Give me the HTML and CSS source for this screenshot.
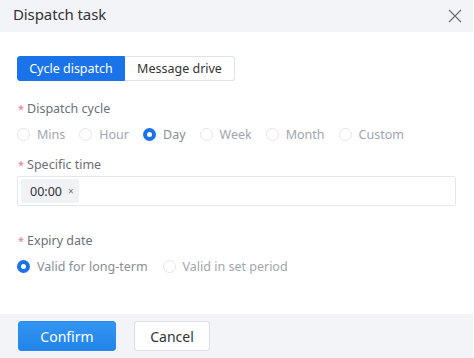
FILE: index.html
```html
<!DOCTYPE html>
<html>
<head>
<meta charset="utf-8">
<link rel="stylesheet" href="styles.css">
</head>
<body>
<div class="dialog">
  <div class="header">
    <span class="title">Dispatch task</span>
    <svg class="close" width="14" height="14" viewBox="0 0 14 14"><path d="M1 1L13 13M13 1L1 13" stroke="#6b6f76" stroke-width="1.2" fill="none"/></svg>
  </div>
  <div class="body">
    <div class="segment">
      <span class="seg active">Cycle dispatch</span>
      <span class="seg">Message drive</span>
    </div>
    <div class="field f1">
      <div class="label"><span class="req">*</span>Dispatch cycle</div>
      <div class="radios">
        <span class="radio"><i class="dot"></i>Mins</span>
        <span class="radio"><i class="dot"></i>Hour</span>
        <span class="radio on"><i class="dot"></i>Day</span>
        <span class="radio"><i class="dot"></i>Week</span>
        <span class="radio"><i class="dot"></i>Month</span>
        <span class="radio"><i class="dot"></i>Custom</span>
      </div>
    </div>
    <div class="field f2">
      <div class="label"><span class="req">*</span>Specific time</div>
      <div class="input"><span class="tag">00:00<span class="x">×</span></span></div>
    </div>
    <div class="field f3">
      <div class="label"><span class="req">*</span>Expiry date</div>
      <div class="radios wide">
        <span class="radio on"><i class="dot"></i>Valid for long-term</span>
        <span class="radio"><i class="dot"></i>Valid in set period</span>
      </div>
    </div>
  </div>
  <div class="footer">
    <button class="btn primary">Confirm</button>
    <button class="btn">Cancel</button>
  </div>
</div>
</body>
</html>
```
FILE: styles.css
```css
* { box-sizing: border-box; }
html, body { margin: 0; padding: 0; background: #fff; }
body { font-family: "Noto Sans", "Open Sans", sans-serif; color: #5f6368; width: 474px; height: 358px; overflow: hidden; }
.dialog { width: 473px; height: 358px; display: flex; flex-direction: column; }
.header { height: 32px; background: #f2f4f8; display: flex; align-items: center; justify-content: space-between; padding: 0 11px 0 13px; flex: none; }
.title { font-size: 15px; color: #333; letter-spacing: -0.1px; position: relative; top: -2px; }
.close { display: block; }
.body { flex: 1; padding: 24px 17px 0 17px; }
.segment { display: flex; height: 25px; }
.seg { font-size: 12.5px; display: flex; align-items: center; justify-content: center; border: 1px solid #dfe2e7; color: #333; }
.seg.active { width: 108px; background: #1a73e8; border-color: #1a73e8; color: #fff; border-radius: 3px 0 0 3px; }
.seg:not(.active) { width: 110px; border-left: none; border-radius: 0 3px 3px 0; }
.field { display: flex; flex-direction: column; }
.f1 { margin-top: 19px; }
.f2 { margin-top: 13px; }
.f3 { margin-top: 26px; }
.label { font-size: 12.5px; color: #6b6f76; height: 18px; line-height: 18px; display: flex; align-items: center; }
.req { color: #e8769a; font-size: 11px; margin-right: 3px; margin-left: 1px; }
.radios { display: flex; gap: 14px; margin-top: 8px; height: 17px; align-items: center; }
.wide { gap: 15px; }
.radio { display: flex; align-items: center; font-size: 12.5px; color: #a2a6ad; gap: 7px; }
.radio .dot { width: 13px; height: 13px; border-radius: 50%; border: 1px solid #e3e5e9; background: #fff; display: block; flex: none; }
.radio.on { color: #8a8e95; }
.radio.on .dot { border: 4px solid #1a73e8; }
.input { margin-top: 2px; height: 30px; border: 1px solid #e4e7ec; border-radius: 2px; padding: 2px 3px; display: flex; align-items: stretch; }
.tag { background: #f0f2f5; font-size: 12.5px; color: #333; padding: 0 9px; display: flex; align-items: center; width: 58px; border-radius: 2px; }
.tag .x { font-size: 10px; color: #777; margin-left: 6px; }
.footer { height: 44px; background: #f2f4f8; flex: none; display: flex; align-items: center; padding: 0 18px; gap: 18px; }
.btn { height: 30px; font-family: inherit; font-size: 14px; border-radius: 3px; border: 1px solid #dcdfe4; background: #fff; color: #333; width: 76px; padding: 0; }
.btn.primary { width: 98px; background: linear-gradient(#3395f2, #2184e9); border-color: #2a8aed; color: #fff; }
```
